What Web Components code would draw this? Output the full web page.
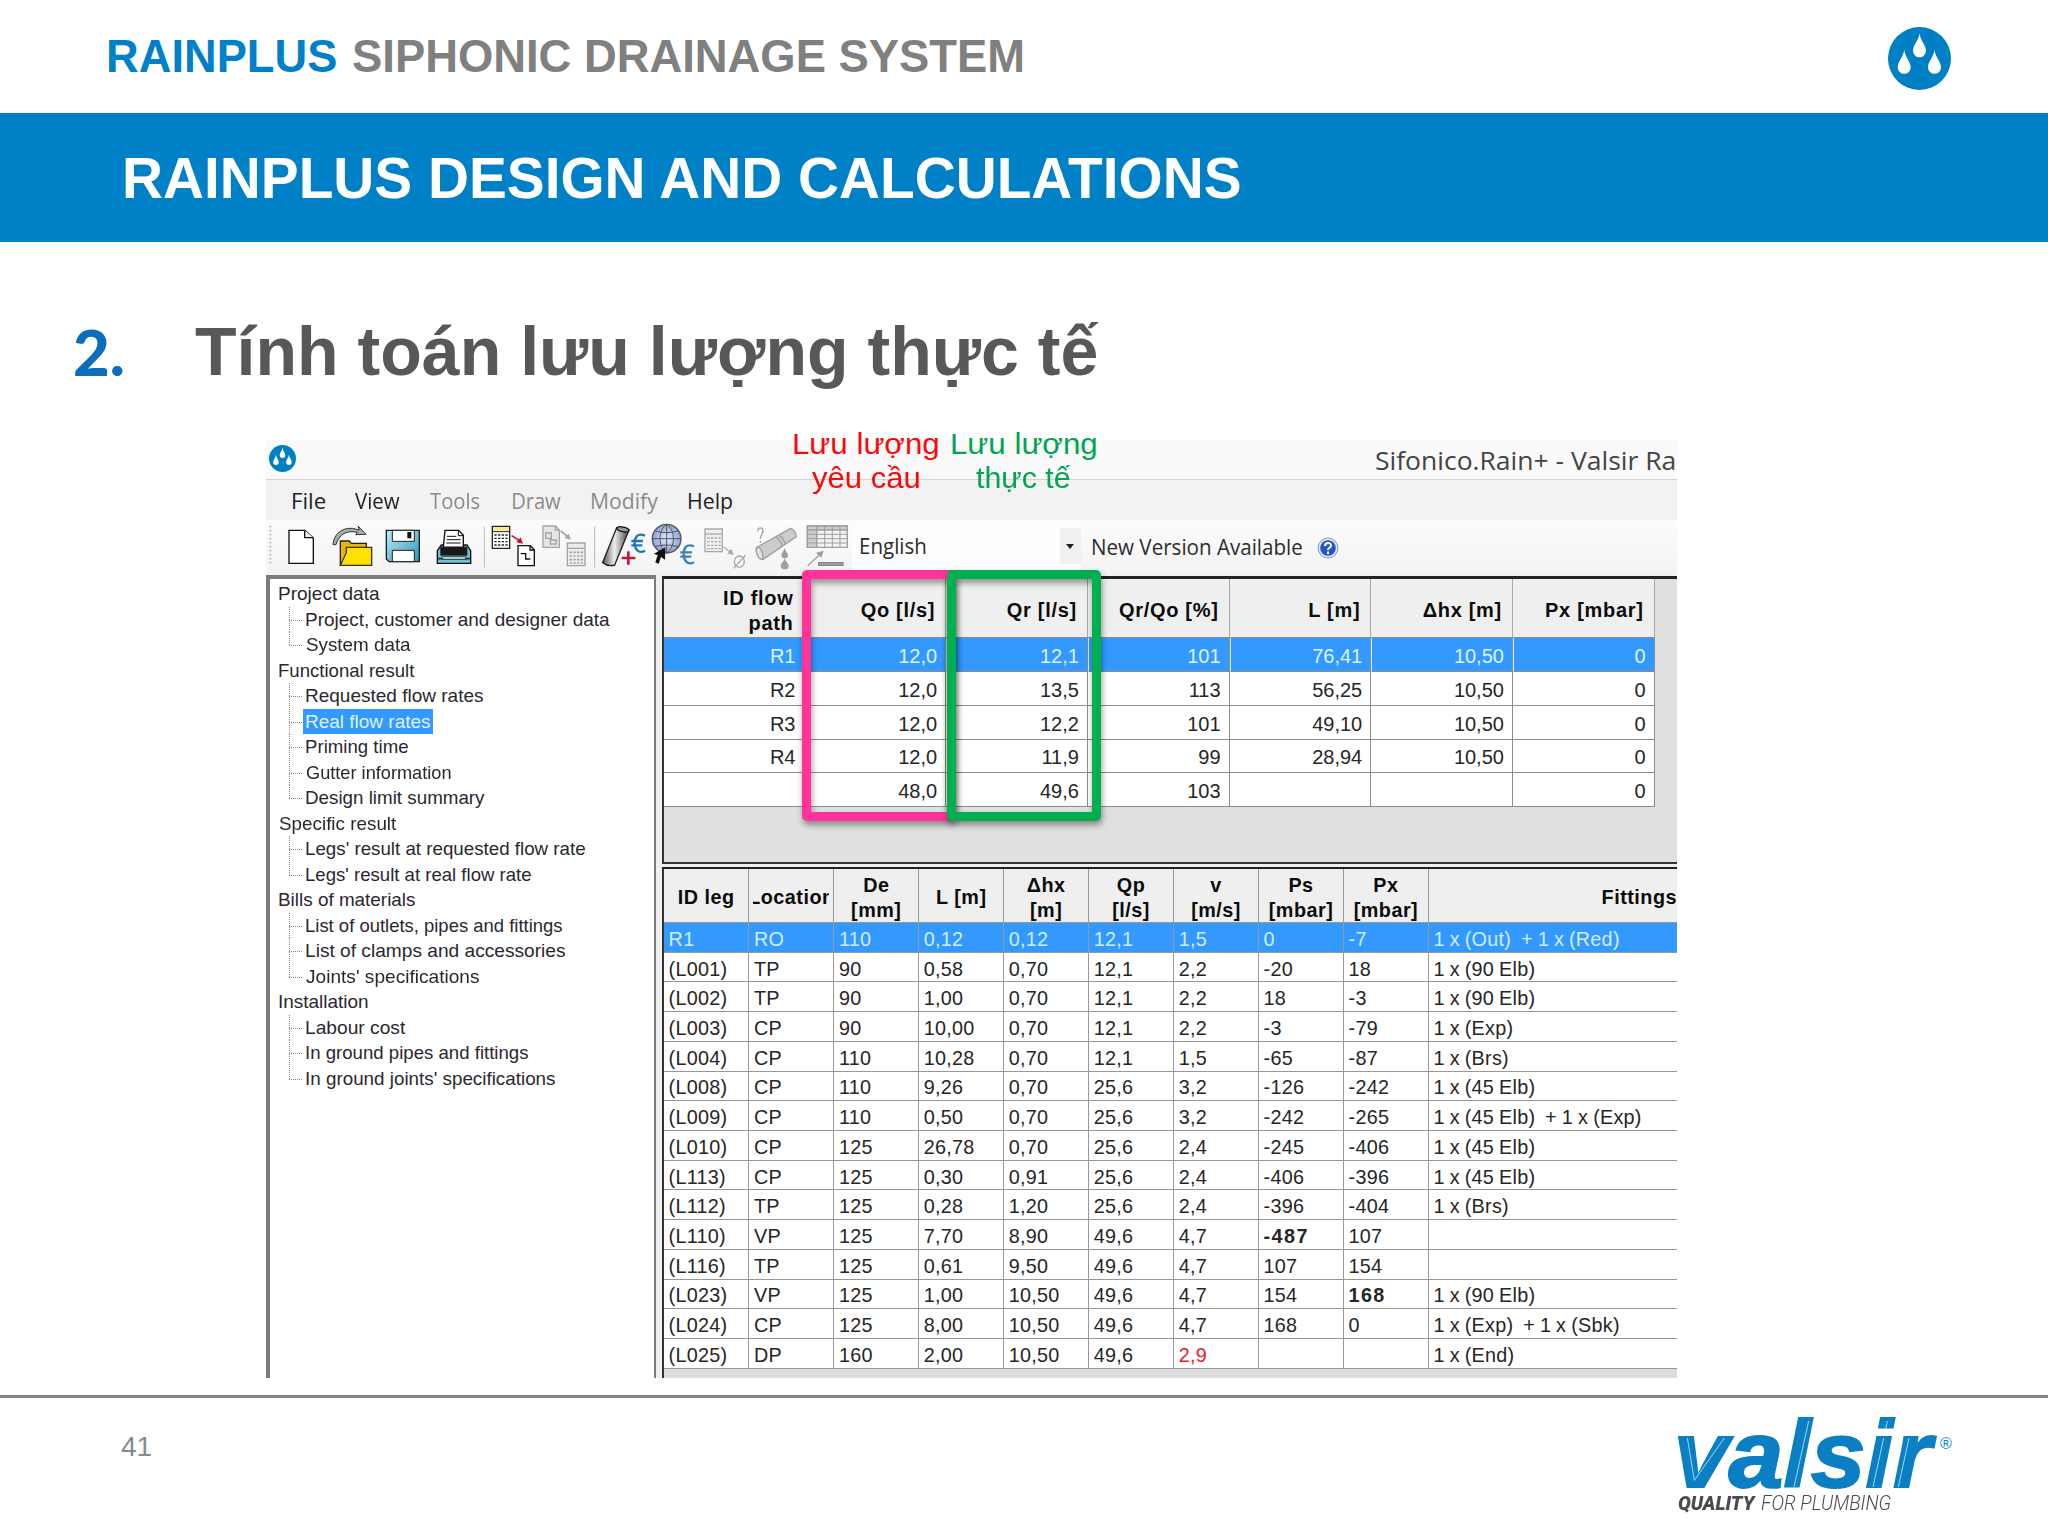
<!DOCTYPE html>
<html lang="vi">
<head>
<meta charset="utf-8">
<title>Rainplus design and calculations</title>
<style>
  html, body { margin: 0; background: #fff; }
  body { width: 2048px; height: 1536px; overflow: hidden; font-family: "Liberation Sans", Arial, sans-serif; }
</style>
</head>
<body>
<slide-page></slide-page>

<script>
const DROPS = `
  <circle cx="31.5" cy="31.5" r="31.5" fill="#0080c4"/>
  <g fill="#fff">
    <path d="M31.500 6.500C32.500 14 38 18 38 23.800a6.500 6.500 0 0 1-13 0C25 18 30.500 14 31.500 6.500Z"/>
    <path d="M16.200 23C17.200 30.500 22.700 34.500 22.700 40.300a6.500 6.500 0 0 1-13 0C9.700 34.500 15.200 30.500 16.200 23Z"/>
    <path d="M46.500 23C47.500 30.500 53 34.500 53 40.300a6.500 6.500 0 0 1-13 0C40 34.500 45.500 30.500 46.500 23Z"/>
  </g>`;

// one line of text whose ink is stretched to the width given in "w"
class FitText extends HTMLElement {
  constructor() {
    super();
    this.attachShadow({ mode: "open" });
  }

  connectedCallback() {
    const w = Number(this.getAttribute("w"));
    this.shadowRoot.innerHTML = `
      <style>
        :host { display: block; flex: none; width: ${w}px; white-space: nowrap; }
        span { display: inline-block; transform-origin: 0 50%; white-space: pre; }
      </style>
      <span><slot></slot></span>`;
    const span = this.shadowRoot.querySelector("span");
    const cs = getComputedStyle(span);
    const ctx = document.createElement("canvas").getContext("2d");
    ctx.font = `${cs.fontStyle} ${cs.fontWeight} ${cs.fontSize} ${cs.fontFamily}`;
    const m = ctx.measureText(this.textContent);
    const left = -m.actualBoundingBoxLeft;
    const k = w / (m.actualBoundingBoxRight - left);
    span.style.transform = `translateX(${-left * k}px) scaleX(${k})`;
  }
}
customElements.define("fit-text", FitText);

class DropsLogo extends HTMLElement {
  constructor() {
    super();
    this.attachShadow({ mode: "open" }).innerHTML = `
      <style>
        :host { display: block; flex: none; }
        svg { display: block; width: 100%; height: 100%; }
      </style>
      <svg viewBox="0 0 63 63">${DROPS}</svg>`;
  }
}
customElements.define("drops-logo", DropsLogo);

// toolbar icons: every box starts where the previous one ends, 3 units per pixel
const ICONS = {
  blank: { x: 18, w: 182, body: `
    <path d="M31 288V400" stroke="#aaa" stroke-width="6" stroke-dasharray="4 8"/>
    <path d="M87 301H135L160 324V400H87Z" fill="#fff" stroke="#111" stroke-width="4"/>
    <path d="M134 301V323H160" fill="#eee" stroke="#111" stroke-width="4"/>` },
  open: { x: 200, w: 155, body: `
    <path d="M218 344C220 312 244 293 276 295L297 300L293 288L317 313L286 314L291 307C260 300 236 312 227 344Z" fill="#aaa" stroke="#333" stroke-width="3"/>
    <path d="M240 406V333H267L273 340H318V352" fill="#e8b800" stroke="#222" stroke-width="4"/>
    <path d="M240 406L258 368V352H334V406Z" fill="#ffe100" stroke="#333" stroke-width="4"/>` },
  save: { x: 355, w: 150, body: `
    <defs><linearGradient id="s" x2="1" y2="1"><stop stop-color="#bfeaf5"/><stop offset="1" stop-color="#3492b5"/></linearGradient></defs>
    <path d="M380 301H479V395H388L380 387Z" fill="url(#s)" stroke="#14242c" stroke-width="4"/>
    <path d="M398 301H464V334H398Z" fill="#fff" stroke="#14242c" stroke-width="3"/>
    <path d="M443 306H455V325H443Z" fill="#111"/>
    <path d="M398 361H464V395H398Z" fill="#fff" stroke="#14242c" stroke-width="3"/>` },
  print: { x: 505, w: 150, body: `
    <path d="M533 362L545 345H622L633 362V400H533Z" fill="#72bfd2" stroke="#111" stroke-width="4"/>
    <path d="M551 352L556 301H597L611 316V352Z" fill="#fff" stroke="#111" stroke-width="4"/>
    <path d="M596 301V317H611M562 319H590M561 329H603M560 339H603" fill="none" stroke="#111" stroke-width="3"/>
    <path d="M542 350H623V377H542Z" fill="#181818"/>
    <path d="M533 386H633" stroke="#12333c" stroke-width="5"/>
    <path d="M548 380H618V388H548Z" fill="#b8e8ee" stroke="#111" stroke-width="2"/>` },
  calc: { x: 655, w: 180, body: `
    <path d="M674 290V412" stroke="#bbb" stroke-width="3"/>
    <path d="M698 289H750V355H698Z" fill="#fff" stroke="#222" stroke-width="4"/>
    <path d="M700 291H748V303H700Z" fill="#ffe89a"/>
    <path d="M698 305H750" stroke="#222" stroke-width="3"/>
    <path d="M704 315H745M704 325H745M704 335H745M704 345H745" stroke="#222" stroke-width="4" stroke-dasharray="7 4"/>
    <path d="M756 317L779 332" stroke="#c8102e" stroke-width="5"/><path d="M790 341L770 337L783 322Z" fill="#c8102e"/>
    <path d="M775 347H812L824 359V407H775Z" fill="#fff" stroke="#111" stroke-width="4"/>
    <path d="M811 347V360H824M783 371H798V387H812" fill="none" stroke="#111" stroke-width="4"/>` },
  uncalc: { x: 835, w: 155, body: `
    <path d="M850 288H888L899 300V352H850Z" fill="#e6e6e6" stroke="#a5a5a5" stroke-width="4"/>
    <path d="M887 288V300H899M858 309H875V330H890V342H872V325H858Z" fill="none" stroke="#a5a5a5" stroke-width="4"/>
    <path d="M903 303L924 320" stroke="#a5a5a5" stroke-width="5"/><path d="M934 329L914 324L927 311Z" fill="#a5a5a5"/>
    <path d="M923 339H976V407H923Z" fill="#ececec" stroke="#a5a5a5" stroke-width="4"/>
    <path d="M923 355H976" stroke="#a5a5a5" stroke-width="4"/>
    <path d="M930 367H970M930 378H970M930 389H970M930 399H970" stroke="#a5a5a5" stroke-width="5" stroke-dasharray="7 4"/>` },
  pipe: { x: 990, w: 175, body: `
    <defs><linearGradient id="p"><stop stop-color="#555"/><stop offset=".45" stop-color="#eee"/><stop offset="1" stop-color="#444"/></linearGradient></defs>
    <path d="M1004 290V412" stroke="#bbb" stroke-width="3"/>
    <path d="M1070 293L1107 300L1064 405Q1044 411 1028 398Z" fill="url(#p)" stroke="#222" stroke-width="4"/>
    <ellipse cx="1089" cy="298" rx="18" ry="7" transform="rotate(12 1089 298)" fill="#999" stroke="#111" stroke-width="4"/>
    <path d="M1085 384H1126M1105 364V404" stroke="#c01836" stroke-width="8"/>
    <path d="M1155 317C1130 307 1124 325 1124 340S1134 373 1155 362M1114 333H1149M1114 346H1147" fill="none" stroke="#1977b8" stroke-width="7"/>` },
  globe: { x: 1165, w: 155, body: `
    <defs><radialGradient id="g"><stop stop-color="#e6edff"/><stop offset="1" stop-color="#8ba3d8"/></radialGradient></defs>
    <circle cx="1221" cy="326" r="43" fill="url(#g)" stroke="#555" stroke-width="4"/>
    <path d="M1221 283V369M1178 326H1264M1187 303Q1221 313 1255 303M1187 350Q1221 340 1255 350M1221 283C1194 300 1194 352 1221 369C1248 352 1248 300 1221 283" fill="none" stroke="#555" stroke-width="3"/>
    <path d="M1217 352L1183 371L1194 376L1187 397L1197 401L1204 381L1216 389Z" fill="#111"/>
    <path d="M1303 349C1278 339 1272 357 1272 373S1282 407 1303 397M1262 367H1297M1262 380H1295" fill="none" stroke="#3b83b5" stroke-width="7"/>` },
  zero: { x: 1320, w: 150, body: `
    <g transform="translate(1020 240)" fill="none" stroke="#a8a8a8" stroke-width="4">
      <path d="M315 57H367V125H315Z" fill="#f0f0f0"/><path d="M315 72H367"/>
      <path d="M322 84H362M322 95H362M322 106H362M322 116H362" stroke-dasharray="7 4"/>
      <path d="M372 112L391 126"/><path d="M402 134L382 131L394 117Z" fill="#a8a8a8" stroke="none"/>
      <ellipse cx="418" cy="155" rx="15" ry="17"/><path d="M401 175L437 135"/>
    </g>` },
  drip: { x: 1470, w: 150, body: `
    <g transform="translate(1020 240)" fill="none" stroke="#a0a0a0" stroke-width="4">
      <path d="M473 64C474 50 490 50 489 64C488 73 481 74 481 86M481 93V99"/>
      <path d="M469 113L572 55Q587 60 589 80L488 149Q468 142 469 113Z" fill="#ccc"/>
      <ellipse cx="479" cy="130" rx="8" ry="18" transform="rotate(-20 479 130)" fill="#e4e4e4"/>
      <path d="M528 82Q543 90 546 108M538 77Q552 85 555 101"/>
      <path d="M554 113C556 124 564 128 564 135a10 10 0 0 1-20 0C544 128 552 124 554 113ZM554 144C556 155 566 160 566 167a12 11 0 0 1-24 0C542 160 552 155 554 144Z" fill="#a0a0a0" stroke="none"/>
    </g>` },
  sheet: { x: 1620, w: 155, body: `
    <g transform="translate(1020 240)" fill="none" stroke="#a0a0a0" stroke-width="4">
      <path d="M622 48H742V112H622Z" fill="#f2f2f2"/><path d="M622 48H742V60H622ZM622 48H650V112H622Z" fill="#ccc"/>
      <path d="M622 73H742M622 86H742M622 99H742M650 48V112M674 48V112M697 48V112M720 48V112" stroke-width="3"/>
      <path d="M623 167L662 131"/><path d="M671 122L664 144L648 128Z" fill="#a0a0a0" stroke="none"/>
      <path d="M654 162H731" stroke="#888" stroke-width="12"/><path d="M657 162H728" stroke="#aaa" stroke-width="4"/>
    </g>` },
};

class ToolIcon extends HTMLElement {
  constructor() {
    super();
    this.attachShadow({ mode: "open" });
  }

  connectedCallback() {
    const icon = ICONS[this.getAttribute("name")];
    this.shadowRoot.innerHTML = `
      <style>
        :host { display: block; flex: none; }
        svg { display: block; }
      </style>
      <svg width="${icon.w / 3}" height="55" viewBox="${icon.x} 270 ${icon.w} 165">${icon.body}</svg>`;
  }
}
customElements.define("tool-icon", ToolIcon);

const TREE = [
  ["Project data", 101, [["Project, customer and designer data", 304], ["System data", 105]]],
  ["Functional result", 136, [["Requested flow rates", 177], ["Real flow rates", 124, true], ["Priming time", 102], ["Gutter information", 145], ["Design limit summary", 179]]],
  ["Specific result", 118, [["Legs' result at requested flow rate", 279], ["Legs' result at real flow rate", 225]]],
  ["Bills of materials", 136, [["List of outlets, pipes and fittings", 256], ["List of clamps and accessories", 259], ["Joints' specifications", 173]]],
  ["Installation", 89, [["Labour cost", 100], ["In ground pipes and fittings", 222], ["In ground joints' specifications", 249]]],
];

class ResultTree extends HTMLElement {
  constructor() {
    super();
    this.attachShadow({ mode: "open" });
  }

  connectedCallback() {
    this.shadowRoot.innerHTML = `
      <style>
        :host { display: block; box-sizing: border-box; padding: 2px 0 0 9px; background: #fff; color: #2b2730; font-size: 19px; line-height: 25.52px; }
        .kids { margin-left: 10px; }
        .kid { display: flex; height: 25.52px; }
        .twig { width: 13px; height: 25.52px; margin-right: 1px; background:
          repeating-linear-gradient(180deg, #888 0 1px, transparent 1px 2px) 0 0 / 1px 100% no-repeat,
          repeating-linear-gradient(90deg, #888 0 1px, transparent 1px 2px) 0 13px / 13px 1px no-repeat; }
        .kid:last-child .twig { background-size: 1px 13px, 13px 1px; }
        .name { padding: 0 3px; }
        .on { background: #3399ff; color: #dff4ff; }
      </style>
      ${TREE.map(([name, w, kids]) => `
        <fit-text w="${w}">${name}</fit-text>
        <div class="kids">${kids.map(([kid, kw, on]) => `
          <div class="kid"><div class="twig"></div><div class="name ${on ? "on" : ""}"><fit-text w="${kw}">${kid}</fit-text></div></div>`).join("")}
        </div>`).join("")}`;
  }
}
customElements.define("result-tree", ResultTree);

const FLOW_HEAD = ["ID flow<br>path", "Qo [l/s]", "Qr [l/s]", "Qr/Qo [%]", "L [m]", "Δhx [m]", "Px [mbar]"];
const FLOW_ROWS = [
  "R1|12,0|12,1|101|76,41|10,50|0",
  "R2|12,0|13,5|113|56,25|10,50|0",
  "R3|12,0|12,2|101|49,10|10,50|0",
  "R4|12,0|11,9|99|28,94|10,50|0",
  "|48,0|49,6|103|||0",
];

class FlowGrid extends HTMLElement {
  constructor() {
    super();
    this.attachShadow({ mode: "open" });
  }

  connectedCallback() {
    this.shadowRoot.innerHTML = `
      <style>
        :host { display: block; background: #e0e0e0; font-size: 20px; color: #262626; }
        .row { display: grid; grid-template-columns: 140.5px repeat(6, 141.7px); width: 990.7px; height: 33.85px; background: #fff; }
        .row > div { display: flex; align-items: center; justify-content: flex-end; box-sizing: border-box; padding: 4px 8px 0 0; border-right: 1px solid #8c8c8c; border-bottom: 1px solid #8c8c8c; text-align: right; }
        .head { height: 59px; background: #efefef; color: #0c0c0c; font-weight: bold; line-height: 24.4px; letter-spacing: .7px; }
        .head > div { padding: 5px 10px 0 0; border-right-color: #aaa; }
        .on { background: #3399ff; color: #dff4ff; }
        .on > div + div { border-left: 1px solid #cfe6fb; }
      </style>
      <div class="row head">${FLOW_HEAD.map((t) => `<div><span>${t}</span></div>`).join("")}</div>
      ${FLOW_ROWS.map((r, i) => `<div class="row ${i ? "" : "on"}">${r.split("|").map((t) => `<div>${t}</div>`).join("")}</div>`).join("")}`;
  }
}
customElements.define("flow-grid", FlowGrid);

const LEG_HEAD = ["ID leg", "Location", "De<br>[mm]", "L [m]", "Δhx<br>[m]", "Qp<br>[l/s]", "v<br>[m/s]", "Ps<br>[mbar]", "Px<br>[mbar]", "Fittings"];
const LEG_ROWS = [
  "R1|RO|110|0,12|0,12|12,1|1,5|0|-7|1 x (Out)  + 1 x (Red)",
  "(L001)|TP|90|0,58|0,70|12,1|2,2|-20|18|1 x (90 Elb)",
  "(L002)|TP|90|1,00|0,70|12,1|2,2|18|-3|1 x (90 Elb)",
  "(L003)|CP|90|10,00|0,70|12,1|2,2|-3|-79|1 x (Exp)",
  "(L004)|CP|110|10,28|0,70|12,1|1,5|-65|-87|1 x (Brs)",
  "(L008)|CP|110|9,26|0,70|25,6|3,2|-126|-242|1 x (45 Elb)",
  "(L009)|CP|110|0,50|0,70|25,6|3,2|-242|-265|1 x (45 Elb)  + 1 x (Exp)",
  "(L010)|CP|125|26,78|0,70|25,6|2,4|-245|-406|1 x (45 Elb)",
  "(L113)|CP|125|0,30|0,91|25,6|2,4|-406|-396|1 x (45 Elb)",
  "(L112)|TP|125|0,28|1,20|25,6|2,4|-396|-404|1 x (Brs)",
  "(L110)|VP|125|7,70|8,90|49,6|4,7|<b>-487</b>|107|",
  "(L116)|TP|125|0,61|9,50|49,6|4,7|107|154|",
  "(L023)|VP|125|1,00|10,50|49,6|4,7|154|<b>168</b>|1 x (90 Elb)",
  "(L024)|CP|125|8,00|10,50|49,6|4,7|168|0|1 x (Exp)  + 1 x (Sbk)",
  "(L025)|DP|160|2,00|10,50|49,6|<i>2,9</i>|||1 x (End)",
];

class LegGrid extends HTMLElement {
  constructor() {
    super();
    this.attachShadow({ mode: "open" });
  }

  connectedCallback() {
    this.shadowRoot.innerHTML = `
      <style>
        :host { display: block; background: #dedede; font-size: 19.8px; color: #262626; }
        .row { display: grid; grid-template-columns: 85.4px repeat(8, 84.95px) 1fr; height: 29.73px; background: #fff; letter-spacing: .25px; }
        .row > div { display: flex; align-items: center; box-sizing: border-box; min-width: 0; padding: 4px 0 0 4.6px; border-right: 1px solid #989898; border-bottom: 1px solid #989898; white-space: pre; }
        .row > div:last-child { border-right: 0; word-spacing: -.8px; }
        .head { height: 54px; background: #efefef; color: #0c0c0c; font-weight: bold; line-height: 24.4px; letter-spacing: .5px; text-align: center; }
        .head > div { justify-content: center; padding: 4px 4px 0; }
        .head span { display: flex; justify-content: center; width: 100%; overflow: hidden; }
        .head > div:last-child { padding-right: 0; }
        .head > div:last-child span { justify-content: flex-end; }
        .on { background: #3399ff; color: #cfeeff; }
        b { letter-spacing: 1.4px; }
        i { color: #e8202a; font-style: normal; }
      </style>
      <div class="row head">${LEG_HEAD.map((t) => `<div><span><div>${t}</div></span></div>`).join("")}</div>
      ${LEG_ROWS.map((r, i) => `<div class="row ${i ? "" : "on"}">${r.split("|").map((t) => `<div>${t}</div>`).join("")}</div>`).join("")}`;
  }
}
customElements.define("leg-grid", LegGrid);

class AppWindow extends HTMLElement {
  constructor() {
    super();
    this.attachShadow({ mode: "open" });
  }

  connectedCallback() {
    this.shadowRoot.innerHTML = `
      <style>
        :host { display: flex; flex-direction: column; position: relative; width: 1411px; height: 938px; background: #f0f0f0; }
        .title, .menu, .tools, .combo { display: flex; font-family: "Open Sans", "Noto Sans", sans-serif; }
        .title { box-sizing: border-box; height: 40px; justify-content: space-between; padding: 0 2px 0 3px; background: #fafafa; border-bottom: 1px solid #d2d2d2; color: #444; font-size: 25.5px; line-height: 41px; }
        drops-logo { width: 27px; height: 27px; margin-top: 5px; }
        .menu { height: 40px; padding-left: 27px; background: #f2f2f2; color: #222; font-size: 21.5px; line-height: 41px; }
        .off { color: #8b8b8b; }
        .tools { height: 55px; background: linear-gradient(#fcfcfc, #f3f3f3); color: #2c2c2c; font-size: 21px; line-height: 55px; }
        .combo { box-sizing: border-box; align-items: center; justify-content: space-between; width: 229px; padding-left: 9px; height: 52px; background: #fdfdfd; }
        .drop { display: flex; align-items: center; justify-content: center; width: 21px; height: 36px; background: #f1f1f1; }
        .arrow { border: 4px solid transparent; border-top: 5px solid #222; border-bottom: 0; }
        .help { width: 22px; margin: 17px 0 0 15px; }
        .body { display: flex; flex: 1; min-height: 0; }
        .tree { display: flex; width: 390px; box-sizing: border-box; border: solid #7c7c7c; border-width: 4px 2px 0 4px; }
        result-tree { flex: 1; }
        .panes { display: flex; flex-direction: column; flex: 1; min-width: 0; margin-left: 6px; padding-top: 1px; }
        flow-grid, leg-grid { box-sizing: border-box; border-left: 2px solid #333; }
        flow-grid { height: 288px; border-top: 3px solid #222; border-bottom: 2px solid #333; }
        leg-grid { flex: 1; margin-top: 3px; border-top: 2px solid #222; overflow: hidden; }
        .mark { position: absolute; box-sizing: border-box; top: 130px; height: 251px; border: 9px solid; border-radius: 5px; filter: drop-shadow(1px 4px 3px rgba(0, 0, 0, .4)); }
        .asked { left: 536px; width: 154px; border-color: #ff3399; }
        .real { left: 681px; width: 154px; border-color: #00b050; }
        .note { position: absolute; top: -13px; display: flex; flex-direction: column; align-items: center; width: 145px; font-size: 30px; line-height: 34px; }
        .red { left: 527px; color: #fb0808; }
        .green { left: 685px; color: #00a650; }
      </style>
      <div class="title"><drops-logo></drops-logo><fit-text w="299">Sifonico.Rain+ - Valsir Ra</fit-text></div>
      <div class="menu">
        <fit-text w="32">File</fit-text>
        <fit-text w="45" style="margin-left:30px">View</fit-text>
        <fit-text w="50" class="off" style="margin-left:30px">Tools</fit-text>
        <fit-text w="48" class="off" style="margin-left:33px">Draw</fit-text>
        <fit-text w="66" class="off" style="margin-left:31px">Modify</fit-text>
        <fit-text w="43" style="margin-left:31px">Help</fit-text>
      </div>
      <div class="tools">
        ${Object.keys(ICONS).map((n) => `<tool-icon name="${n}"></tool-icon>`).join("")}
        <div class="combo"><fit-text w="65">English</fit-text><div class="drop"><div class="arrow"></div></div></div>
        <fit-text w="209" style="margin-left:12px">New Version Available</fit-text>
        <svg class="help" viewBox="0 0 22 22" height="22">
          <circle cx="11" cy="11" r="10" fill="#dce6f8" stroke="#8898b8"/>
          <circle cx="11" cy="11" r="7.800" fill="#2456c8"/>
          <path d="M8 9C8 5 14 5 14 8.500C14 11 11 10.500 11 13M11 14.500V17" fill="none" stroke="#fff" stroke-width="2"/>
        </svg>
      </div>
      <div class="body">
        <div class="tree"><result-tree></result-tree></div>
        <div class="panes"><flow-grid></flow-grid><leg-grid></leg-grid></div>
      </div>
      <div class="mark asked"></div>
      <div class="mark real"></div>
      <div class="note red"><fit-text w="144">Lưu lượng</fit-text><fit-text w="107">yêu cầu</fit-text></div>
      <div class="note green"><fit-text w="144">Lưu lượng</fit-text><fit-text w="95">thực tế</fit-text></div>`;
  }
}
customElements.define("app-window", AppWindow);

class ValsirLogo extends HTMLElement {
  constructor() {
    super();
    this.attachShadow({ mode: "open" });
  }

  connectedCallback() {
    this.shadowRoot.innerHTML = `
      <style>
        :host { display: block; width: 275px; padding-top: 4px; }
        .name { display: grid; grid-template-columns: 257px auto; height: 77px; color: #0b7fc3; font: italic bold 94px/80px "Liberation Sans", sans-serif; -webkit-text-stroke: 2px #0b7fc3; }
        .name > * { grid-row: 1; }
        fit-text, svg { grid-column: 1; }
        svg { z-index: 1; }
        .reg { margin: 19px 0 0 4px; font: 16px/20px "Liberation Sans", sans-serif; -webkit-text-stroke: 0; }
        .tag { display: flex; gap: 6px; color: #4b4b4d; font: italic 20px/22px Roboto, "Open Sans", sans-serif; }
        .tag :first-child { font-weight: 900; }
        .tag :last-child { font-weight: 300; }
        .tag fit-text { margin-left: -1px; }
      </style>
      <div class="name">
        <fit-text w="257">valsir</fit-text>
        <svg width="257" height="80" viewBox="0 0 771 240" fill="none" stroke="#9fd6f3" stroke-width="3">
          <path d="M25 69L46 196L136 69M389 18L345 216M625 18L620 42M614 69L582 216M690 69L658 216"/>
        </svg>
        <div class="reg">®</div>
      </div>
      <div class="tag"><fit-text w="78">QUALITY</fit-text><fit-text w="130">FOR PLUMBING</fit-text></div>`;
  }
}
customElements.define("valsir-logo", ValsirLogo);

class SlidePage extends HTMLElement {
  constructor() {
    super();
    this.attachShadow({ mode: "open" });
  }

  connectedCallback() {
    this.render();
  }

  render() {
    this.shadowRoot.innerHTML = `
      <style>
        :host { display: flex; flex-direction: column; width: 2048px; height: 1536px; background: #fff; }
        header { display: flex; height: 113px; padding-left: 109px; color: #808080; font-weight: bold; font-size: 47px; line-height: 112px; }
        header .brand { color: #0080c8; margin-right: 17px; }
        header drops-logo { width: 63px; height: 63px; margin: 27px 0 0 866px; }
        .band { height: 129px; padding-left: 125px; background: #0080c6; color: #fff; font-weight: bold; font-size: 58px; line-height: 130px; }
        h1 { display: flex; box-sizing: border-box; height: 198px; margin: 0; padding: 70px 0 0 75px; color: #58585a; font-size: 69px; line-height: 80px; }
        .num { margin-right: 72px; color: #0a6ebd; font-family: Lato, "Open Sans", sans-serif; font-size: 62px; font-weight: 900; line-height: 80px; }
        app-window { margin-left: 266px; }
        footer { display: flex; justify-content: space-between; box-sizing: border-box; height: 141px; margin-top: 17px; padding: 13px 94px 0 121px; border-top: 3px solid #858585; color: #8a8a8a; font-size: 28px; line-height: 72px; }
      </style>
      <header>
        <fit-text w="227" class="brand">RAINPLUS</fit-text>
        <fit-text w="669">SIPHONIC DRAINAGE SYSTEM</fit-text>
        <drops-logo></drops-logo>
      </header>
      <div class="band"><fit-text w="1117">RAINPLUS DESIGN AND CALCULATIONS</fit-text></div>
      <h1><fit-text w="48" class="num">2.</fit-text><fit-text w="904">Tính toán lưu lượng thực tế</fit-text></h1>
      <app-window></app-window>
      <footer><span>41</span><valsir-logo></valsir-logo></footer>`;
  }
}
customElements.define("slide-page", SlidePage);
</script>
</body>
</html>
